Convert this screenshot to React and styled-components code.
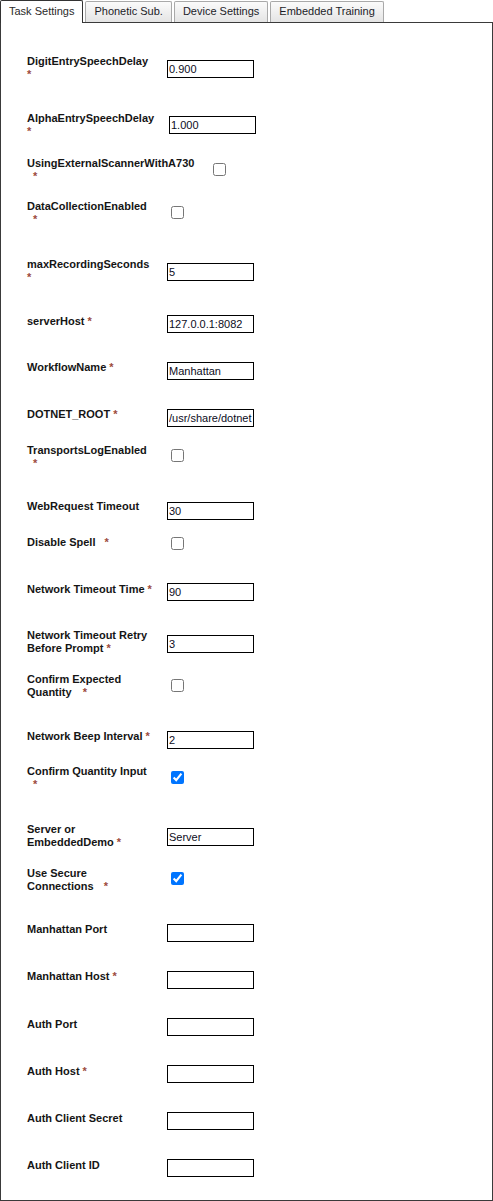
import React from "react";
import styled, { createGlobalStyle } from "styled-components";

const Global = createGlobalStyle`
  html, body { margin: 0; padding: 0; background: #fff; }
  body { font-family: "Liberation Sans", Arial, sans-serif; }
  * { box-sizing: border-box; }
`;

const Page = styled.div`
  width: 493px;
  height: 1201px;
  display: flex;
  flex-direction: column;
`;

const TabBar = styled.div`
  display: flex;
  align-items: flex-end;
  gap: 2px;
  height: 22px;
`;

const Tab = styled.div`
  position: relative;
  z-index: 1;
  font-size: 11px;
  line-height: 13px;
  white-space: nowrap;
  padding: ${(p) => (p.$active ? "4px 8px 0" : "3px 8px 0")};
  height: ${(p) => (p.$active ? "23px" : "21px")};
  margin-bottom: ${(p) => (p.$active ? "-1px" : "0")};
  border: 1px solid ${(p) => (p.$active ? "#333" : "#a9a9a9")};
  border-bottom: none;
  border-radius: 2px 2px 0 0;
  color: ${(p) => (p.$active ? "#2a2a2a" : "#1c1c28")};
  background: ${(p) =>
    p.$active ? "#fff" : "linear-gradient(#fbfbfb, #e4e4e4)"};
`;

const Panel = styled.div`
  flex: 1;
  border: 1px solid #3a3a3a;
  padding: 32px 0 0 26px;
  display: flex;
  flex-direction: column;
`;

const Row = styled.div`
  display: flex;
  align-items: flex-start;
  height: ${(p) => p.$h}px;
  flex-shrink: 0;
`;

const Label = styled.div`
  width: ${(p) => p.$w || 140}px;
  flex-shrink: 0;
  font-size: 11px;
  line-height: 13.4px;
  font-weight: bold;
  color: #151515;
  white-space: nowrap;
`;

const Star = styled.span`
  color: #9c4a3c;
  font-weight: bold;
  margin-left: ${(p) => p.$gap ?? 3}px;
`;

const Control = styled.div`
  margin-top: ${(p) => p.$dy}px;
  display: flex;
`;

const TextBox = styled.input`
  width: 87px;
  height: 18px;
  border: 1px solid #000;
  padding: 0 1px;
  margin: 0;
  font-family: "Liberation Sans", Arial, sans-serif;
  font-size: 11px;
  color: #0c0c1c;
  background: #fff;
  outline: none;
`;

const Check = styled.input`
  width: 13px;
  height: 13px;
  margin: 0 0 0 4px;
`;

const rows = [
  { l: ["DigitEntrySpeechDelay"], star: "below", h: 57, dy: 5, v: "0.900" },
  { l: ["AlphaEntrySpeechDelay"], star: "below", h: 45, dy: 4, v: "1.000", w: 142 },
  { l: ["UsingExternalScannerWithA730"], star: "belowIndent", h: 43, dy: 6, cb: true, w: 182 },
  { l: ["DataCollectionEnabled"], star: "belowIndent", h: 58, dy: 6, cb: true },
  { l: ["maxRecordingSeconds"], star: "below", h: 57, dy: 5, v: "5" },
  { l: ["serverHost"], star: "inline", h: 46, dy: 0, v: "127.0.0.1:8082" },
  { l: ["WorkflowName"], star: "inline", h: 47, dy: 1, v: "Manhattan" },
  { l: ["DOTNET_ROOT"], star: "inline", h: 36, dy: 1, v: "/usr/share/dotnet" },
  { l: ["TransportsLogEnabled"], star: "belowIndent", h: 56, dy: 5, cb: true },
  { l: ["WebRequest Timeout"], h: 36, dy: 2, v: "30" },
  { l: ["Disable Spell"], star: "wide", gap: 9, h: 47, dy: 1, cb: true },
  { l: ["Network Timeout Time"], star: "inline", h: 46, dy: 0, v: "90" },
  { l: ["Network Timeout Retry", "Before Prompt"], star: "inline", h: 44, dy: 6, v: "3" },
  { l: ["Confirm Expected", "Quantity"], star: "wide", gap: 11, h: 57, dy: 6, cb: true },
  { l: ["Network Beep Interval"], star: "inline", h: 35, dy: 1, v: "2" },
  { l: ["Confirm Quantity Input"], star: "belowIndent", h: 58, dy: 6, cb: true, checked: true },
  { l: ["Server or", "EmbeddedDemo"], star: "inline", h: 44, dy: 5, v: "Server" },
  { l: ["Use Secure", "Connections"], star: "wide", gap: 10, h: 56, dy: 5, cb: true, checked: true },
  { l: ["Manhattan Port"], h: 47, dy: 1, v: "" },
  { l: ["Manhattan Host"], star: "inline", h: 48, dy: 1, v: "" },
  { l: ["Auth Port"], h: 47, dy: 0, v: "" },
  { l: ["Auth Host"], star: "inline", h: 47, dy: 0, v: "" },
  { l: ["Auth Client Secret"], h: 47, dy: 0, v: "" },
  { l: ["Auth Client ID"], h: 40, dy: 0, v: "" },
];

function FieldLabel({ r }) {
  const lines = r.l;
  const last = lines.length - 1;
  return (
    <Label $w={r.w}>
      {lines.map((t, i) => (
        <div key={i}>
          {t}
          {i === last && r.star === "inline" && <Star>*</Star>}
          {i === last && r.star === "wide" && <Star $gap={r.gap}>*</Star>}
        </div>
      ))}
      {r.star === "below" && (
        <div>
          <Star $gap={0}>*</Star>
        </div>
      )}
      {r.star === "belowIndent" && (
        <div>
          <Star $gap={6}>*</Star>
        </div>
      )}
    </Label>
  );
}

export default function App() {
  return (
    <>
      <Global />
      <Page>
        <TabBar>
          <Tab $active>Task Settings</Tab>
          <Tab>Phonetic Sub.</Tab>
          <Tab>Device Settings</Tab>
          <Tab>Embedded Training</Tab>
        </TabBar>
        <Panel>
          {rows.map((r, i) => (
            <Row key={i} $h={r.h}>
              <FieldLabel r={r} />
              <Control $dy={r.dy}>
                {r.cb ? (
                  <Check type="checkbox" defaultChecked={!!r.checked} />
                ) : (
                  <TextBox type="text" defaultValue={r.v} />
                )}
              </Control>
            </Row>
          ))}
        </Panel>
      </Page>
    </>
  );
}
